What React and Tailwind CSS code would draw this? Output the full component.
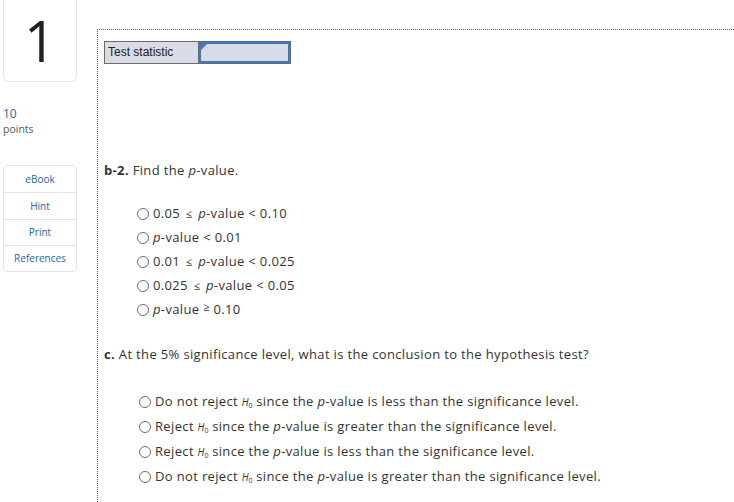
import React from "react";

const font = { fontFamily: "'Open Sans', Lato, sans-serif" };

function Radio() {
    return <span className="inline-block w-[12px] h-[12px] rounded-full border border-[#6b6b6b] bg-white mr-[4px] shrink-0"></span>;
}

function P() {
    return <i className="italic">p</i>;
}

function H0() {
    return <i className="italic text-[10px] tracking-normal">H<sub className="text-[7px] not-italic">0</sub></i>;
}

export default function App() {
    const pOptions = [
        <>0.05 <span className="text-[11px] mx-[2px]">≤</span> <P />-value &lt; 0.10</>,
        <><P />-value &lt; 0.01</>,
        <>0.01 <span className="text-[11px] mx-[2px]">≤</span> <P />-value &lt; 0.025</>,
        <>0.025 <span className="text-[11px] mx-[2px]">≤</span> <P />-value &lt; 0.05</>,
        <><P />-value <span className="text-[11px] relative top-[-3px]">≥</span> 0.10</>,
    ];
    const cOptions = [
        <>Do not reject <H0 /> since the <P />-value is less than the significance level.</>,
        <>Reject <H0 /> since the <P />-value is greater than the significance level.</>,
        <>Reject <H0 /> since the <P />-value is less than the significance level.</>,
        <>Do not reject <H0 /> since the <P />-value is greater than the significance level.</>,
    ];

    return (
        <div className="w-[734px] h-[502px] bg-white overflow-hidden flex text-[#333]" style={font}>
            <div className="w-[97px] shrink-0 pl-[3px]">
                <div className="w-[74px] h-[92px] mt-[-10px] border border-[#e3e3e3] rounded-[5px] flex items-center justify-center pt-[8px]">
                    <span className="text-[56px] font-normal text-[#222] leading-none">1</span>
                </div>
                <div className="mt-[25px] text-[12px] text-[#2a63a8] leading-[14px]">10</div>
                <div className="text-[10.5px] text-[#555] leading-[14px] mt-[1px]">points</div>
                <div className="mt-[29px] w-[74px] border border-[#e3e3e3] rounded-[4px] text-[10px] text-[#2a63a8]">
                    <div className="h-[26px] flex items-center justify-center">eBook</div>
                    <div className="h-[27px] flex items-center justify-center border-t border-[#e3e3e3]">Hint</div>
                    <div className="h-[26px] flex items-center justify-center border-t border-[#e3e3e3]">Print</div>
                    <div className="h-[26px] flex items-center justify-center border-t border-[#e3e3e3]">References</div>
                </div>
            </div>
            <div className="flex-1 mt-[29px] border-l border-t border-dotted border-[#2f6db5] pl-[6px] text-[13px] tracking-[0.35px]">
                <div className="mt-[11px] flex h-[23px] border border-[#6b6b6b] w-[187px] text-[12px] tracking-normal" style={{ fontFamily: "'Liberation Sans', Arial, sans-serif" }}>
                    <div className="w-[94px] bg-[#d9dce6] border-r border-[#6b6b6b] pl-[3px] leading-[20px] text-[#222]">Test statistic</div>
                    <div className="flex-1 bg-[#d9dce6] border-2 border-[#3e78c2] relative">
                        <span className="absolute left-0 top-0 w-0 h-0 border-t-[6px] border-r-[6px] border-t-[#3e78c2] border-r-transparent"></span>
                    </div>
                </div>
                <div className="mt-[98px] leading-[17px]"><b className="font-bold">b-2.</b> Find the <P />-value.</div>
                <div className="mt-[26px] pl-[33px] flex flex-col gap-[7px]">
                    {pOptions.map((o, i) => (
                        <div key={i} className="flex items-center leading-[17px]"><Radio /><span>{o}</span></div>
                    ))}
                </div>
                <div className="mt-[28px] leading-[17px]"><b className="font-bold">c.</b> At the 5% significance level, what is the conclusion to the hypothesis test?</div>
                <div className="mt-[30px] pl-[35px] flex flex-col gap-[7px]">
                    {cOptions.map((o, i) => (
                        <div key={i} className="flex items-center leading-[17px]"><Radio /><span>{o}</span></div>
                    ))}
                </div>
            </div>
        </div>
    );
}
